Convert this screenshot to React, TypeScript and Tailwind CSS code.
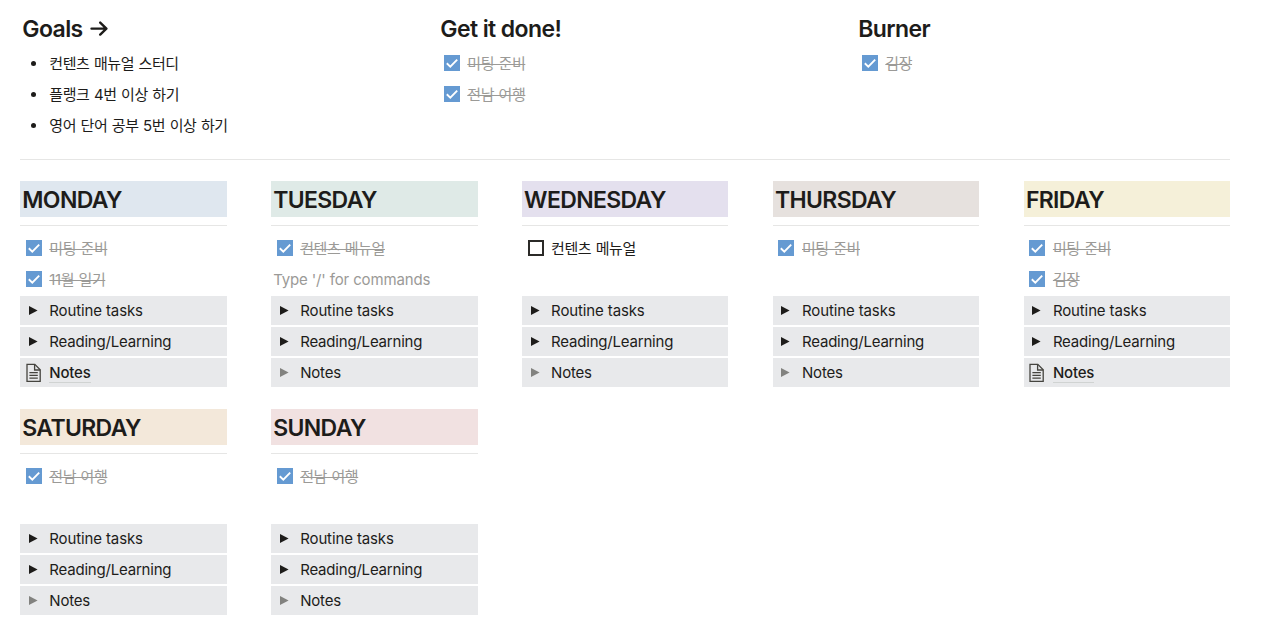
import type { ReactNode } from "react";
import { clsx } from "clsx";

type Task = { text: string; done: boolean };

type Day = {
  name: string;
  tint: string;
  tasks: Task[];
  hint?: string;
  notesPage?: boolean;
};

const goals = ["컨텐츠 매뉴얼 스터디", "플랭크 4번 이상 하기", "영어 단어 공부 5번 이상 하기"];

const days: Day[] = [
  {
    name: "MONDAY",
    tint: "bg-[#dfe7ef]",
    tasks: [
      { text: "미팅 준비", done: true },
      { text: "11월 일기", done: true },
    ],
    notesPage: true,
  },
  {
    name: "TUESDAY",
    tint: "bg-[#dfeae7]",
    tasks: [{ text: "컨텐츠 메뉴얼", done: true }],
    hint: "Type '/' for commands",
  },
  {
    name: "WEDNESDAY",
    tint: "bg-[#e4e0ee]",
    tasks: [{ text: "컨텐츠 메뉴얼", done: false }],
  },
  {
    name: "THURSDAY",
    tint: "bg-[#e6e1de]",
    tasks: [{ text: "미팅 준비", done: true }],
  },
  {
    name: "FRIDAY",
    tint: "bg-[#f5f0d9]",
    tasks: [
      { text: "미팅 준비", done: true },
      { text: "김장", done: true },
    ],
    notesPage: true,
  },
  {
    name: "SATURDAY",
    tint: "bg-[#f3e8da]",
    tasks: [{ text: "전남 여행", done: true }],
  },
  {
    name: "SUNDAY",
    tint: "bg-[#f1e1e1]",
    tasks: [{ text: "전남 여행", done: true }],
  },
];

function Row({ marker, shaded, children }: { marker: ReactNode; shaded?: boolean; children: ReactNode }) {
  return (
    <div className={clsx("flex h-[29px] items-center", shaded && "bg-[#e8e9eb]")}>
      <span className="flex w-[29px] shrink-0 items-center pl-[5.5px]">{marker}</span>
      {children}
    </div>
  );
}

function Checkbox({ checked }: { checked: boolean }) {
  if (!checked) return <span className="size-4 border-2 border-[#2b2a28]" />;
  return (
    <svg viewBox="0 0 16 16" className="size-4 bg-[#659ad2]">
      <path d="M2.8 8.2 6.3 11.6 13.2 4.7" fill="none" stroke="#fff" strokeWidth="1.9" />
    </svg>
  );
}

function Triangle({ muted }: { muted?: boolean }) {
  return (
    <svg viewBox="0 0 9 9" className={clsx("ml-[3px] size-[9px]", muted ? "fill-[#82827f]" : "fill-[#1d1c1a]")}>
      <path d="M0 0 8.6 4.5 0 9Z" />
    </svg>
  );
}

function PageIcon() {
  return (
    <svg viewBox="0 0 16 20" className="h-5 w-4" fill="none" stroke="#45443f" strokeWidth="1.3">
      <path d="M1 1.4H8.8L14.2 6.8V18.4H1Z" />
      <path d="M8.6 1.4V7H14.2M3.4 9.7H11.8M3.4 12.4H11.8M3.4 15.1H11.8" />
    </svg>
  );
}

function TaskRow({ text, done }: Task) {
  return (
    <Row marker={<Checkbox checked={done} />}>
      <span
        className={clsx(
          "pt-0.5 text-[15px] tracking-[-0.42px] [word-spacing:0.7px]",
          done && "text-[#9b9a97] line-through decoration-1",
        )}
      >
        {text}
      </span>
    </Row>
  );
}

function Section({ title, children }: { title: ReactNode; children?: ReactNode }) {
  return (
    <section>
      <h2 className="flex h-9 items-center pl-0.5 text-[23px] font-semibold tracking-[-0.6px]">{title}</h2>
      <div className="mt-px flex flex-col gap-0.5">{children}</div>
    </section>
  );
}

function DayColumn({ day }: { day: Day }) {
  return (
    <section>
      <h2 className={clsx("flex h-9 items-center pt-px pl-0.5 text-[23px] font-semibold tracking-[-0.65px]", day.tint)}>
        {day.name}
      </h2>
      <hr className="mt-2 border-[#e6e6e5]" />
      <div className="mt-[7px] flex flex-col gap-0.5">
        <div className="flex h-[61px] flex-col gap-0.5">
          {day.tasks.map((task) => (
            <TaskRow key={task.text} {...task} />
          ))}
          {day.hint && (
            <p className="flex h-[29px] items-center pt-[3px] pl-0.5 tracking-[-0.15px] text-[#9b9a97]">{day.hint}</p>
          )}
        </div>
        <Row shaded marker={<Triangle />}>
          <span className="pt-px tracking-[-0.12px]">Routine tasks</span>
        </Row>
        <Row shaded marker={<Triangle />}>
          <span className="pt-px">Reading/Learning</span>
        </Row>
        <Row shaded marker={day.notesPage ? <PageIcon /> : <Triangle muted />}>
          {day.notesPage ? (
            <span className="border-b border-[#d0d3d2] leading-[19px] font-medium">Notes</span>
          ) : (
            <span className="pt-px">Notes</span>
          )}
        </Row>
      </div>
    </section>
  );
}

export default function App() {
  return (
    <main className="h-[636px] overflow-hidden bg-white pt-[11px] pl-[20.3px] font-['Inter','Noto_Sans_CJK_KR',sans-serif] text-[15px] leading-5 tracking-[-0.2px] text-[#1d1c1a]">
      <div className="w-[1210px]">
        <div className="grid h-[148px] grid-cols-3 gap-x-11">
          <Section
            title={
              <>
                Goals
                <svg
                  viewBox="0 0 18 16"
                  className="ml-[7px] h-4 w-[18px]"
                  fill="none"
                  stroke="currentColor"
                  strokeWidth="2.4"
                  strokeLinecap="round"
                  strokeLinejoin="round"
                >
                  <path d="M1.5 7.6H16M10.2 1.6 16.4 7.6 10.2 13.6" />
                </svg>
              </>
            }
          >
            {goals.map((goal) => (
              <Row key={goal} marker={<span className="mt-0.5 ml-[5px] size-[5px] rounded-full bg-[#1d1c1a]" />}>
                <span className="pt-0.5 tracking-[-0.42px] [word-spacing:0.7px]">{goal}</span>
              </Row>
            ))}
          </Section>
          <Section title="Get it done!">
            <TaskRow text="미팅 준비" done />
            <TaskRow text="전남 여행" done />
          </Section>
          <Section title="Burner">
            <TaskRow text="김장" done />
          </Section>
        </div>
        <hr className="border-[#e6e6e5]" />
        <div className="mt-[21px] grid grid-cols-5 gap-x-[44.5px] gap-y-[22.3px]">
          {days.map((day) => (
            <DayColumn key={day.name} day={day} />
          ))}
        </div>
      </div>
    </main>
  );
}
